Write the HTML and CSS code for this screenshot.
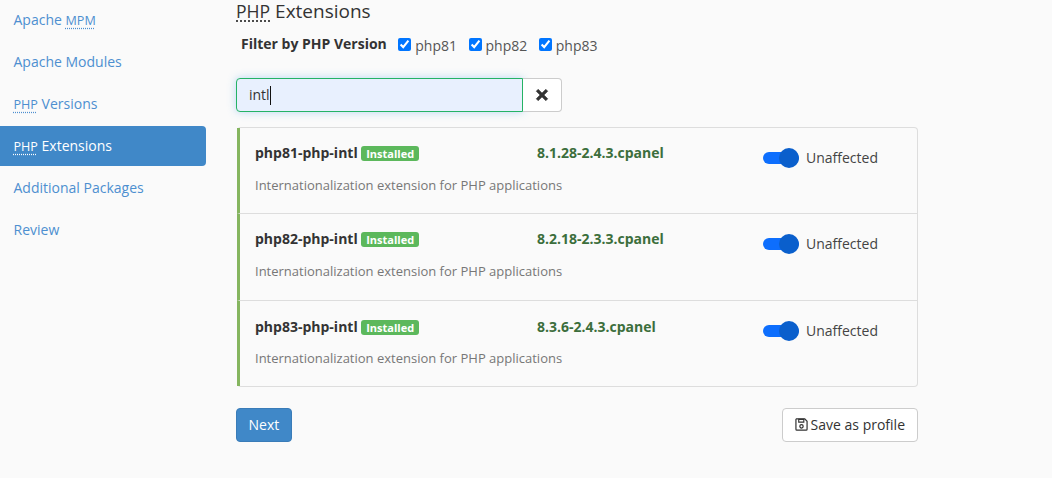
FILE: index.html
```html
<!DOCTYPE html>
<html lang="en">
<head>
<meta charset="utf-8">
<title>PHP Extensions</title>
<link rel="stylesheet" href="styles.css">
</head>
<body>
<div class="page">
  <nav class="sidebar">
    <a class="nav-item">Apache <abbr>MPM</abbr></a>
    <a class="nav-item">Apache Modules</a>
    <a class="nav-item"><abbr>PHP</abbr> Versions</a>
    <a class="nav-item active"><abbr>PHP</abbr> Extensions</a>
    <a class="nav-item">Additional Packages</a>
    <a class="nav-item">Review</a>
  </nav>
  <main class="content">
    <h1 class="title"><abbr>PHP</abbr> Extensions</h1>
    <div class="filter">
      <strong class="filter-label">Filter by PHP Version</strong>
      <label class="check"><input type="checkbox" checked><span>php81</span></label>
      <label class="check"><input type="checkbox" checked><span>php82</span></label>
      <label class="check"><input type="checkbox" checked><span>php83</span></label>
    </div>
    <div class="search">
      <div class="search-input"><span>intl</span><i class="caret"></i></div>
      <button class="clear" aria-label="Clear">
        <svg viewBox="0 0 14 14" width="14" height="14"><path d="M3.2 1.2 7 5l3.8-3.8 2 2L9 7l3.8 3.8-2 2L7 9l-3.8 3.8-2-2L5 7 1.2 3.2z" fill="#333" stroke="#333" stroke-width=".5" stroke-linejoin="round"/></svg>
      </button>
    </div>
    <div class="list">
      <div class="row">
        <div class="row-top">
          <div class="name"><strong>php81-php-intl</strong><span class="badge">Installed</span></div>
          <div class="version">8.1.28-2.4.3.cpanel</div>
          <div class="state"><span class="toggle"><i></i></span>Unaffected</div>
        </div>
        <p class="desc">Internationalization extension for PHP applications</p>
      </div>
      <div class="row">
        <div class="row-top">
          <div class="name"><strong>php82-php-intl</strong><span class="badge">Installed</span></div>
          <div class="version">8.2.18-2.3.3.cpanel</div>
          <div class="state"><span class="toggle"><i></i></span>Unaffected</div>
        </div>
        <p class="desc">Internationalization extension for PHP applications</p>
      </div>
      <div class="row">
        <div class="row-top">
          <div class="name"><strong>php83-php-intl</strong><span class="badge">Installed</span></div>
          <div class="version">8.3.6-2.4.3.cpanel</div>
          <div class="state"><span class="toggle"><i></i></span>Unaffected</div>
        </div>
        <p class="desc">Internationalization extension for PHP applications</p>
      </div>
    </div>
    <div class="actions">
      <button class="btn primary">Next</button>
      <button class="btn">
        <svg viewBox="0 0 14 14" width="13" height="13"><path d="M1.5 1h9L13 3.500V12a1 1 0 0 1-1 1H2a1 1 0 0 1-1-1V1.500z" fill="none" stroke="#333" stroke-width="1.300"/><path d="M4 1.500h5.500V4.500H4z" fill="none" stroke="#333" stroke-width="1.200"/><circle cx="7" cy="9" r="1.800" fill="none" stroke="#333" stroke-width="1.300"/></svg>
        Save as profile
      </button>
    </div>
  </main>
</div>
</body>
</html>
```
FILE: styles.css
```css
* { box-sizing: border-box; }
html, body { margin: 0; height: 100%; }
body {
  background: #fafafa;
  color: #333;
  font-family: "Open Sans", sans-serif;
  font-size: 14px;
  line-height: 20px;
  overflow: hidden;
}
abbr { font-size: 90%; text-decoration: underline dotted; text-underline-offset: 3px; }
.page { display: flex; align-items: flex-start; }
.sidebar { width: 206px; flex: none; display: flex; flex-direction: column; gap: 2px; }
.nav-item {
  height: 40px;
  padding: 10px 13.500px;
  border-radius: 0 4px 4px 0;
  color: #4d8fd0;
  white-space: nowrap;
}
.nav-item.active { background: #4088c8; color: #fff; }
.content { width: 682px; margin-left: 30px; }
.title { margin: 0; height: 22px; font-size: 19px; font-weight: 400; line-height: 22px; }
.title abbr { font-size: 17.600px; }
.filter { display: flex; align-items: center; height: 22px; margin-top: 11px; padding-left: 5px; }
.filter-label { font-weight: 700; margin-right: 11.500px; }
.check { display: flex; align-items: center; color: #555; margin-right: 11.500px; }
.check input { margin: 0 4px 0 0; width: 13px; height: 13px; accent-color: #0075ff; }
.check span { padding-top: 3px; }
.search { display: flex; margin-top: 23px; height: 34px; width: 326px; }
.search-input {
  flex: 1;
  display: flex;
  align-items: center;
  padding-left: 12px;
  background: #e8f0fe;
  border: 1px solid #25b365;
  border-radius: 4px 0 0 4px;
  box-shadow: 0 0 8px rgba(102, 175, 233, .45);
  color: #333;
}
.caret { width: 1px; height: 19px; background: #111; }
.clear {
  width: 39px;
  display: flex;
  align-items: center;
  justify-content: center;
  padding: 0;
  background: #fff;
  border: 1px solid #ccc;
  border-left: 0;
  border-radius: 0 4px 4px 0;
}
.list { margin: 15px 0 0 1px; border: 1px solid #ddd; border-left: 0; border-radius: 4px; }
.row { height: 86.330px; padding: 15px 15px 0 15px; border-left: 3px solid #85b55f; border-bottom: 1px solid #ddd; }
.row:last-child { height: 85.330px; padding-top: 16px; border-bottom: 0; }
.row:last-child .desc { margin-top: 11px; }
.row-top { display: flex; align-items: center; height: 20px; }
.name { width: 282px; display: flex; align-items: center; flex: none; }
.name strong { font-weight: 700; }
.badge {
  margin: 1px 0 0 3.500px;
  padding: 0 5px;
  height: 15px;
  background: #5cb85c;
  color: #fff;
  border-radius: 3px;
  font-size: 11px;
  font-weight: 700;
  line-height: 15px;
}
.version { width: 226px; flex: none; color: #3c6e3c; font-weight: 700; }
.state { display: flex; align-items: center; color: #444; padding-top: 9px; }
.toggle { position: relative; display: block; width: 36px; height: 12px; margin-right: 7px; background: #0d6efd; border-radius: 6px; }
.toggle i { position: absolute; right: 0; top: -4px; width: 20px; height: 20px; background: #0a5fcc; border-radius: 50%; }
.desc { margin: 12px 0 0; font-size: 13px; color: #777; line-height: 20px; }
.actions { display: flex; justify-content: space-between; margin-top: 21px; }
.btn {
  display: flex;
  align-items: center;
  gap: 3px;
  height: 34px;
  padding: 0 12px;
  font: 14px/20px "Open Sans", sans-serif;
  color: #333;
  background: #fff;
  border: 1px solid #ccc;
  border-radius: 4px;
}
.btn.primary { background: #4088c8; border-color: #3a7cb8; color: #fff; padding: 0 11.500px; }
```
